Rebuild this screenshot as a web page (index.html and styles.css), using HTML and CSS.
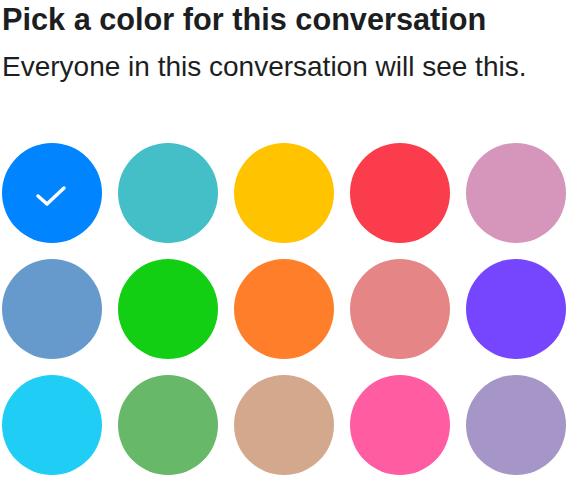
FILE: index.html
```html
<!DOCTYPE html>
<html lang="en">
<head>
  <meta charset="UTF-8" />
  <title>Pick a color</title>
  <link rel="stylesheet" href="styles.css">
</head>
<body>
  <div class="picker">
    <h1>Pick a color for this conversation</h1>
    <p class="hint">Everyone in this conversation will see this.</p>

    <div class="swatches">
      <button class="swatch selected" style="background:#0084ff">
        <svg width="34" height="28" viewBox="0 0 34 28"><path d="M3 17 L12 25 L29 9" fill="none" stroke="#fff" stroke-width="3.5" stroke-linecap="round" stroke-linejoin="round"/></svg>
      </button>
      <button class="swatch" style="background:#44bec7"></button>
      <button class="swatch" style="background:#ffc300"></button>
      <button class="swatch" style="background:#fa3c4c"></button>
      <button class="swatch" style="background:#d696bb"></button>
      <button class="swatch" style="background:#6699cc"></button>
      <button class="swatch" style="background:#13cf13"></button>
      <button class="swatch" style="background:#ff7e29"></button>
      <button class="swatch" style="background:#e68585"></button>
      <button class="swatch" style="background:#7646ff"></button>
      <button class="swatch" style="background:#20cef5"></button>
      <button class="swatch" style="background:#67b868"></button>
      <button class="swatch" style="background:#d4a88c"></button>
      <button class="swatch" style="background:#ff5ca1"></button>
      <button class="swatch" style="background:#a695c7"></button>
    </div>
  </div>
</body>
</html>
```

FILE: styles.css
```css
* {
  margin: 0;
  padding: 0;
  box-sizing: border-box;
}

body {
  background: #fff;
  color: #1c1e21;
  font-family: 'Liberation Sans', Arial, sans-serif;
}

.picker {
  padding: 2px 2px;
}

h1 {
  font-size: 30.7px;
  font-weight: bold;
  line-height: 36px;
}

.hint {
  font-size: 28px;
  line-height: 34px;
  margin-top: 12px;
}

.swatches {
  margin-top: 59px;
  display: grid;
  grid-template-columns: repeat(5, 100px);
  gap: 16px;
}

.swatch {
  width: 100px;
  height: 100px;
  border: none;
  border-radius: 50%;
  display: flex;
  align-items: center;
  justify-content: center;
  cursor: pointer;
}
```
